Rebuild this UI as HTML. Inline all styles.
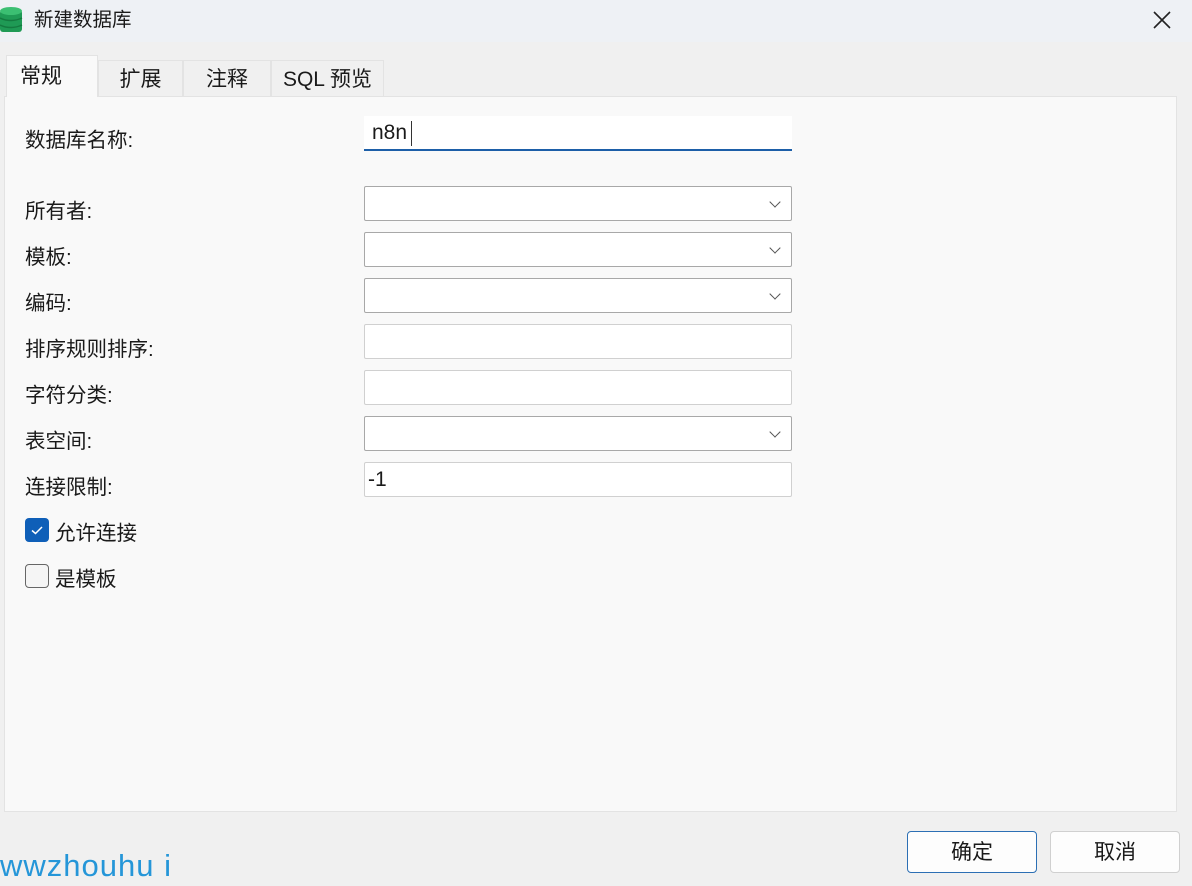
<!DOCTYPE html>
<html><head><meta charset="utf-8"><style>
body{margin:0;width:1192px;height:886px;background:#f0f0f0;font-family:"Liberation Sans","Noto Sans CJK SC",sans-serif;position:relative;overflow:hidden;color:#1a1a1a}
.title{position:absolute;left:0;top:0;width:1192px;height:42px;background:#eef1f5}
.t{position:absolute;font-size:20px;line-height:24px;white-space:nowrap}
.panel{position:absolute;left:4px;top:96px;width:1173px;height:716px;background:#f9f9f9;border:1px solid #e3e3e3;box-sizing:border-box}
.tab{position:absolute;top:60px;height:36px;background:#f0f0f0;border:1px solid #e3e3e3;border-bottom:none;box-sizing:border-box;font-size:21px;line-height:38px;text-align:center}
.fld{position:absolute;left:364px;width:428px;height:35px;background:#fff;border:1px solid #d0d0d0;box-sizing:border-box;border-radius:2px}
.dd{border-color:#a8a8a8}
.dd:after{content:"";position:absolute;right:12px;top:11px;width:7px;height:7px;border-right:1.3px solid #555;border-bottom:1.3px solid #555;transform:rotate(45deg)}
.lbl{position:absolute;left:25px;font-size:20.5px}
.btn{position:absolute;top:831px;height:42px;background:#fdfdfd;border:1px solid #d0d0d0;border-radius:4px;box-sizing:border-box;font-size:21px;line-height:42px;text-align:center}
</style></head><body>
<div class="title"></div>
<svg style="position:absolute;left:0;top:6px" width="24" height="30" viewBox="0 0 24 30"><rect x="0" y="4" width="22" height="22" rx="3" fill="#1f9a55"/><ellipse cx="11" cy="5" rx="11" ry="4" fill="#3bbf72"/><path d="M0 12 Q11 17 22 12 M0 19 Q11 24 22 19" stroke="#147a40" stroke-width="1.5" fill="none"/></svg>
<div class="t" style="left:34px;top:8px;font-size:19.5px">新建数据库</div>
<svg style="position:absolute;left:1152px;top:10px" width="20" height="20"><path d="M2 2L18 18M18 2L2 18" stroke="#222" stroke-width="1.6"/></svg>
<div class="panel"></div>
<div class="tab" style="left:6px;top:55px;height:42px;width:92px;background:#f9f9f9;line-height:42px;text-align:left;padding-left:13px">常规</div>
<div class="tab" style="left:98px;width:85px">扩展</div>
<div class="tab" style="left:183px;width:88px">注释</div>
<div class="tab" style="left:271px;width:113px">SQL 预览</div>

<div class="lbl" style="top:123px">数据库名称:</div>
<div class="fld" style="top:116px;border:none;border-bottom:2px solid #1d5fa8;border-radius:0"><span style="position:absolute;left:8px;top:5px;font-size:21px">n8n</span><span style="position:absolute;left:47px;top:5px;width:1px;height:25px;background:#333"></span></div>

<div class="lbl" style="top:194px">所有者:</div><div class="fld dd" style="top:186px"></div>
<div class="lbl" style="top:240px">模板:</div><div class="fld dd" style="top:232px"></div>
<div class="lbl" style="top:286px">编码:</div><div class="fld dd" style="top:278px"></div>
<div class="lbl" style="top:332px">排序规则排序:</div><div class="fld" style="top:324px"></div>
<div class="lbl" style="top:378px">字符分类:</div><div class="fld" style="top:370px"></div>
<div class="lbl" style="top:424px">表空间:</div><div class="fld dd" style="top:416px"></div>
<div class="lbl" style="top:470px">连接限制:</div><div class="fld" style="top:462px"><span style="position:absolute;left:3px;top:5px;font-size:21px">-1</span></div>

<div style="position:absolute;left:25px;top:518px;width:24px;height:24px;background:#0f5fb8;border-radius:4px"><svg width="24" height="24"><path d="M7 12.5L10.5 15.5L17 9" stroke="#fff" stroke-width="1.5" fill="none"/></svg></div>
<div class="lbl" style="left:55px;top:516px">允许连接</div>
<div style="position:absolute;left:25px;top:564px;width:24px;height:24px;border:1.5px solid #666;border-radius:4px;box-sizing:border-box;background:#f5f5f5"></div>
<div class="lbl" style="left:55px;top:562px">是模板</div>

<div class="btn" style="left:907px;width:130px;border-color:#2c6fb4">确定</div>
<div class="btn" style="left:1050px;width:130px">取消</div>
<div class="t" style="left:0px;top:848px;font-size:31px;line-height:36px;color:#2596d8;letter-spacing:1px">wwzhouhu i</div>
</body></html>
